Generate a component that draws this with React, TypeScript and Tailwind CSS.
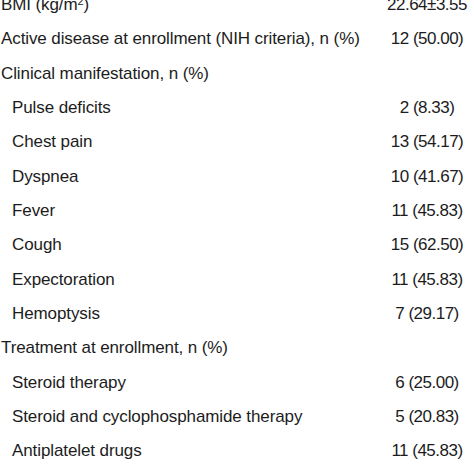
type Row = { label: React.ReactNode; value?: string; indent?: boolean };

const rows: Row[] = [
  {
    label: (
      <>
        BMI (kg/m<sup className="text-[11px]">2</sup>)
      </>
    ),
    value: "22.64±3.55",
  },
  { label: "Active disease at enrollment (NIH criteria), n (%)", value: "12 (50.00)" },
  { label: "Clinical manifestation, n (%)" },
  { label: "Pulse deficits", value: "2 (8.33)", indent: true },
  { label: "Chest pain", value: "13 (54.17)", indent: true },
  { label: "Dyspnea", value: "10 (41.67)", indent: true },
  { label: "Fever", value: "11 (45.83)", indent: true },
  { label: "Cough", value: "15 (62.50)", indent: true },
  { label: "Expectoration", value: "11 (45.83)", indent: true },
  { label: "Hemoptysis", value: "7 (29.17)", indent: true },
  { label: "Treatment at enrollment, n (%)" },
  { label: "Steroid therapy", value: "6 (25.00)", indent: true },
  { label: "Steroid and cyclophosphamide therapy", value: "5 (20.83)", indent: true },
  { label: "Antiplatelet drugs", value: "11 (45.83)", indent: true },
];

const App = () => {
  return (
    <div className="w-[474px] h-[474px] overflow-hidden bg-white">
      <div className="-mt-[12px] pl-[1px] text-[17px] leading-[34.33px] text-[#1c1c1c] font-['Liberation_Sans',Arial,sans-serif]">
        {rows.map((row, i) => (
          <div key={i} className="flex whitespace-nowrap">
            <span className={`flex-1 tracking-[-0.1px] ${row.indent ? "pl-[11px]" : ""}`}>{row.label}</span>
            <span className="w-[95px] pl-[1px] text-center tracking-[-0.5px]">{row.value}</span>
          </div>
        ))}
      </div>
    </div>
  );
};

export default App;
